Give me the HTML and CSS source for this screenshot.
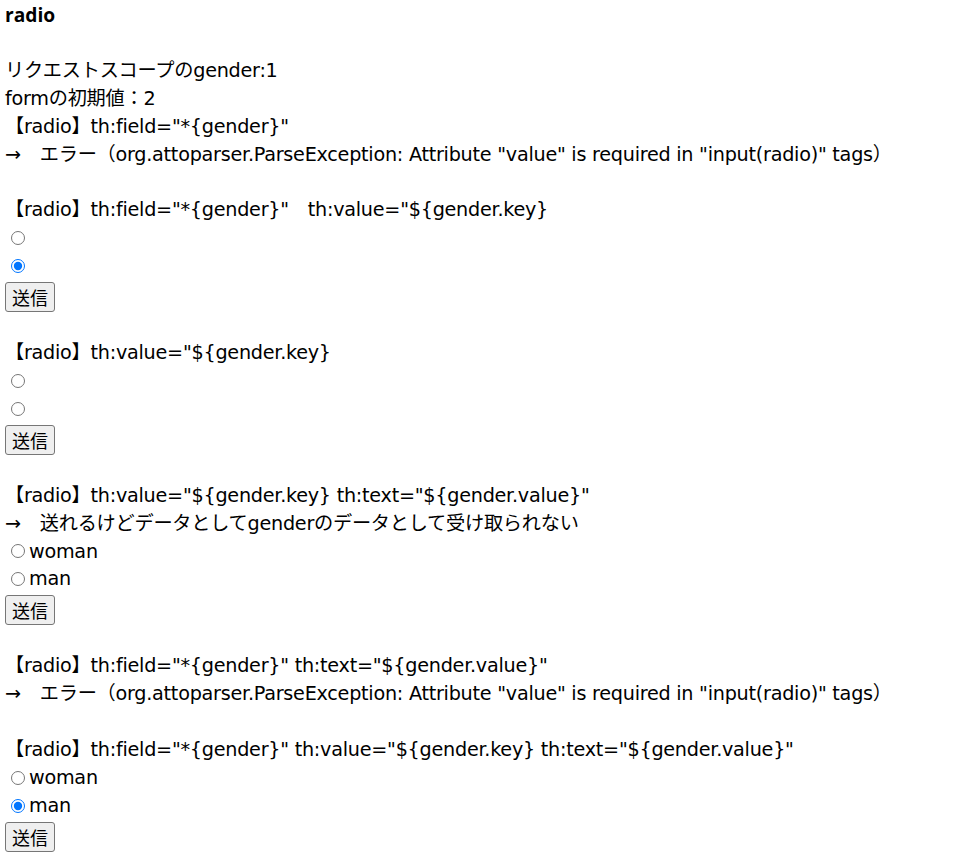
FILE: index.html
```html
<!DOCTYPE html>
<html lang="ja">
<head>
    <meta charset="UTF-8">
    <title>radio</title>
    <link rel="stylesheet" href="styles.css">
</head>
<body>

    <div class="section">
        <p class="line title">radio</p>
    </div>

    <div class="section">
        <p class="line">リクエストスコープのgender:1</p>
        <p class="line">formの初期値：2</p>
        <p class="line">【radio】th:field="*{gender}"</p>
        <p class="line">→　エラー（org.attoparser.ParseException: Attribute "value" is required in "input(radio)" tags）</p>
    </div>

    <form class="section">
        <p class="line">【radio】th:field="*{gender}"　th:value="${gender.key}</p>
        <label class="line choice"><input type="radio" name="g1" value="1"></label>
        <label class="line choice"><input type="radio" name="g1" value="2" checked></label>
        <button type="button" class="send">送信</button>
    </form>

    <form class="section">
        <p class="line">【radio】th:value="${gender.key}</p>
        <label class="line choice"><input type="radio" name="g2" value="1"></label>
        <label class="line choice"><input type="radio" name="g2" value="2"></label>
        <button type="button" class="send">送信</button>
    </form>

    <form class="section">
        <p class="line">【radio】th:value="${gender.key} th:text="${gender.value}"</p>
        <p class="line">→　送れるけどデータとしてgenderのデータとして受け取られない</p>
        <label class="line choice"><input type="radio" name="g3" value="1">woman</label>
        <label class="line choice"><input type="radio" name="g3" value="2">man</label>
        <button type="button" class="send">送信</button>
    </form>

    <div class="section">
        <p class="line">【radio】th:field="*{gender}" th:text="${gender.value}"</p>
        <p class="line">→　エラー（org.attoparser.ParseException: Attribute "value" is required in "input(radio)" tags）</p>
    </div>

    <form class="section">
        <p class="line">【radio】th:field="*{gender}" th:value="${gender.key} th:text="${gender.value}"</p>
        <label class="line choice"><input type="radio" name="g4" value="1">woman</label>
        <label class="line choice"><input type="radio" name="g4" value="2" checked>man</label>
        <button type="button" class="send">送信</button>
    </form>

</body>
</html>
```

FILE: styles.css
```css
body {
    font-family: "DejaVu Sans", "Noto Sans CJK JP", sans-serif;
    font-size: 19.2px;
    line-height: 27.9px;
    letter-spacing: -0.25px;
    color: #000;
    background-color: #fff;
    margin: 0;
    padding: 1px 5px 0 5px;
}
.section {
    margin: 0 0 27.9px 0; /* one empty line between blocks */
}
.line {
    display: block;
    margin: 0;
    white-space: nowrap;
}
.title {
    font-family: "Open Sans", sans-serif;
    font-weight: bold;
    letter-spacing: 0;
}
.choice {
    display: flex;
    align-items: center;
    height: 27.9px;
}
.choice input {
    width: 14px;
    height: 14px;
    margin: 0 4px 0 6px;
}
.send {
    display: block;
    box-sizing: border-box;
    height: 30px;
    margin-top: 2px;
    font-family: "Noto Sans CJK JP", sans-serif;
    font-size: 18px;
    line-height: 26px;
    letter-spacing: 0;
    padding: 1px 6px;
    color: #000;
    background-color: #efefef;
    border: 1px solid #767676;
    border-radius: 3px;
}
form.section {
    margin-bottom: 27px;
}
```
